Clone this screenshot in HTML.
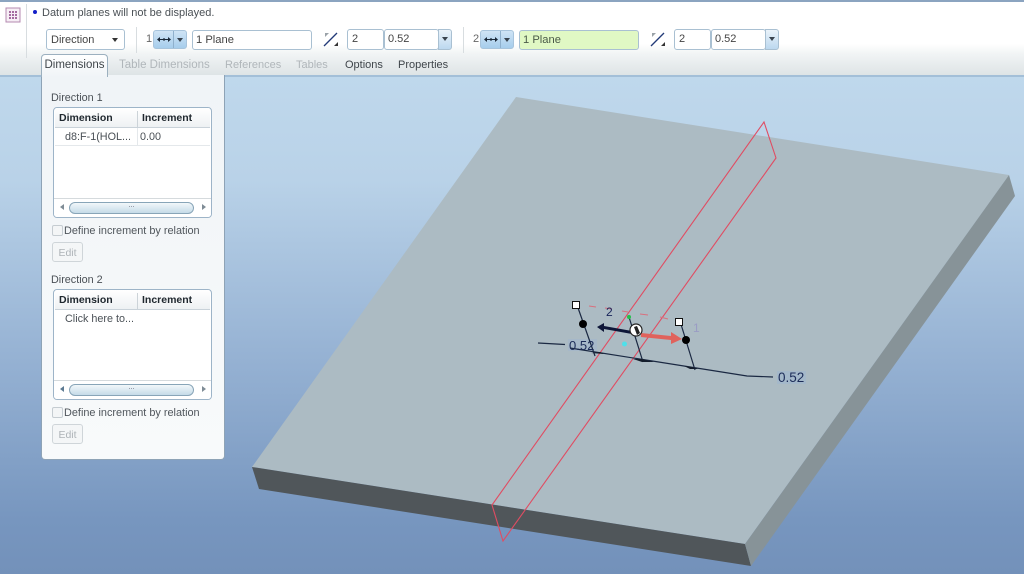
<!DOCTYPE html>
<html>
<head>
<meta charset="utf-8">
<style>
html,body{margin:0;padding:0;width:1024px;height:574px;overflow:hidden}
body{position:relative;font-family:"Liberation Sans",sans-serif;font-size:11px;color:#3a3f44;background:linear-gradient(#bfd8ec 75px,#b9d2e8 180px,#97b3d4 350px,#7796bf 520px,#7391ba 574px)}
.a{position:absolute;white-space:nowrap}
#bar{position:absolute;left:0;top:0;width:1024px;height:77px;background:linear-gradient(#fff 0,#fff 42px,#f1f4f5 52px,#dde3e5 74px);border-top:2px solid #8ba4c0;box-sizing:border-box;border-bottom:2px solid #a3bfd8}
.f{position:absolute;box-sizing:border-box;background:#fff;border:1px solid #a9c0d2;border-radius:3px;height:20px;line-height:18px;padding-left:3px;font-size:11px;color:#444}
.ddb{position:absolute;box-sizing:border-box;width:14px;height:20px;background:linear-gradient(#eaf3fa,#bcd8ef);border:1px solid #a9c0d2;border-radius:0 3px 3px 0}
.ddb:after,.sw i:after{content:"";position:absolute;left:3px;top:7px;border-left:3px solid transparent;border-right:3px solid transparent;border-top:4px solid #39434e}
.sw{position:absolute;box-sizing:border-box;width:34px;height:19px;background:linear-gradient(#cfe4f5,#a6cdec);border:1px solid #a8c4dc;border-radius:3px}
.sw svg{position:absolute;left:3px;top:4px}
.sw b{position:absolute;left:19px;top:0;width:1px;height:17px;background:#8fb0cc}
.sw i{position:absolute;left:20px;top:0;width:12px;height:17px}
.sep{position:absolute;width:1px;background:#d8dde0}
.tab{position:absolute;top:59px;font-size:11.5px;color:#b0b6ba}
#panel{position:absolute;left:41px;top:75px;width:184px;height:385px;box-sizing:border-box;background:linear-gradient(#f0f4f7,#f8fafb);border:1px solid #8ea3b6;border-top:none;border-radius:0 0 4px 4px}
.tb{position:absolute;left:11px;width:159px;height:111px;box-sizing:border-box;background:#fff;border:1px solid #9db4c8;border-radius:4px;overflow:hidden}
.th{position:absolute;left:1px;right:1px;top:0;height:19px;background:linear-gradient(#fff,#eef1f3);border-bottom:1px solid #c9d2d9;font:bold 10.5px/21px "Liberation Sans",sans-serif;color:#20282f}
.th span{position:absolute;top:0}
.th u{position:absolute;left:82px;top:3px;width:1px;height:16px;background:#ccd3d8}
.sb{position:absolute;left:0;right:0;bottom:0;height:18px;border-top:1px solid #d5dadd;background:#fff}
.sb .k{position:absolute;left:15px;top:3px;width:123px;height:10px;border:1px solid #88a5b8;border-radius:6px;background:linear-gradient(#f2f7fa,#c5dbe8);text-align:center;font:7px/6px "Liberation Sans",sans-serif;color:#556}
.sb .l{position:absolute;left:6px;top:5px;border-top:3px solid transparent;border-bottom:3px solid transparent;border-right:4px solid #7f8c96}
.sb .r{position:absolute;right:5px;top:5px;border-top:3px solid transparent;border-bottom:3px solid transparent;border-left:4px solid #7f8c96}
.cb{position:absolute;left:10px;width:11px;height:11px;box-sizing:border-box;border:1px solid #c5ccd1;border-radius:2px;background:#f3f5f6}
.ed{position:absolute;left:10px;width:31px;height:20px;box-sizing:border-box;border:1px solid #cfd5d9;border-radius:3px;background:#f4f6f7;color:#adb3b7;text-align:center;line-height:20px;font-size:10.5px}
</style>
</head>
<body>
<svg class="a" style="left:0;top:0" width="1024" height="574" viewBox="0 0 1024 574">
<polygon points="516,97 1009,175 745,544 252,467" fill="#acbbc3"/>
<polygon points="252,467 745,544 751,566 259,489" fill="#50565a"/>
<polygon points="1009,175 1015,196 751,566 745,544" fill="#879398"/>
<g fill="none" stroke="#e04c62" stroke-width="1.100">
<polygon points="764,122 776,158 503,541 492,505"/>
</g>
<path d="M589,306 L596,307 M605,308 L612,309 M622,311 L628,312 M640,314 L648,315 M660,317 L668,319" stroke="#d9707e" stroke-width="1" fill="none"/>
<rect x="568" y="339" width="29" height="12" fill="#9fb6cf" opacity=".5"/>
<rect x="777" y="371" width="29" height="13" fill="#9fb6cf" opacity=".6"/>
<g stroke="#1a2842" stroke-width="1.200" fill="none">
<path d="M538,343 L565,344.500"/>
<path d="M570,348 L747,376 L773,377"/>
<path d="M577,305 L595,356"/>
<path d="M680,321 L695,370"/>
<path d="M629,317 L643,362"/>
</g>
<g fill="#141d2c">
<path d="M591,353 l9,-1 l4,2 z"/>
<path d="M633,359 l9,0 l12,3 l-12,0 z"/>
<path d="M684,366 l8,1 l6,2 l-8,0 z"/>
</g>
<path d="M597,327 L604,323 L604,326 L632,331 L632,334 L604,329 L604,332 Z" fill="#0e1638"/>
<path d="M641,333 L671,336 L671,332 L682,339 L671,344 L671,340 L641,337 Z" fill="#e0625c"/>
<circle cx="583" cy="324" r="4" fill="#000"/>
<circle cx="686" cy="340" r="4" fill="#000"/>
<rect x="572.500" y="301.500" width="7" height="7" fill="#fff" stroke="#111"/>
<rect x="675.500" y="318.500" width="7" height="7" fill="#fff" stroke="#111"/>
<circle cx="636" cy="330" r="6" fill="#fff" stroke="#222" stroke-width="1.200"/>
<path d="M634,327 L637,335 L640,333 L637,326 Z" fill="#222"/>
<circle cx="629" cy="317" r="2" fill="#22c04a"/>
<circle cx="624.500" cy="344" r="2.500" fill="#4fe0ea"/>
<text x="569" y="350" font-family="Liberation Sans,sans-serif" font-size="13" fill="#1c2c58">0.52</text>
<text x="778" y="382" font-family="Liberation Sans,sans-serif" font-size="13.500" fill="#1c2c58">0.52</text>
<text x="606" y="316" font-family="Liberation Sans,sans-serif" font-size="12" fill="#18245a">2</text>
<text x="693" y="332" font-family="Liberation Sans,sans-serif" font-size="12" fill="#9a9cc4">1</text>
</svg>

<div id="bar"></div>
<svg class="a" style="left:5px;top:7px" width="17" height="17"><rect x="1" y="1" width="14" height="14" fill="#f6eef5" stroke="#b48ab0"/><g fill="#a46aa0"><rect x="4" y="4" width="2" height="2"/><rect x="7" y="4" width="2" height="2"/><rect x="10" y="4" width="2" height="2"/><rect x="4" y="7" width="2" height="2"/><rect x="7" y="7" width="2" height="2"/><rect x="10" y="7" width="2" height="2"/><rect x="4" y="10" width="2" height="2"/><rect x="7" y="10" width="2" height="2"/><rect x="10" y="10" width="2" height="2"/></g></svg>
<div class="sep" style="left:26px;top:4px;height:54px"></div>
<div class="a" style="left:33px;top:10px;width:4px;height:4px;border-radius:50%;background:#1420c8"></div>
<div class="a" style="left:42px;top:7px;font-size:11px;color:#4a5055">Datum planes will not be displayed.</div>

<div class="f" style="left:46px;top:29px;width:79px;height:21px;line-height:20px;padding-left:4px;font-size:11px">Direction<span style="position:absolute;left:65px;top:8px;border-left:3px solid transparent;border-right:3px solid transparent;border-top:4px solid #333"></span></div>
<div class="sep" style="left:136px;top:27px;height:26px"></div>
<div class="a" style="left:146px;top:33px;color:#666">1</div>
<div class="sw" style="left:153px;top:30px"><svg width="14" height="9"><path d="M1,4.500 H13" stroke="#1c2a3a"/><path d="M0,4.500 L3,2 V7 Z M14,4.500 L11,2 V7 Z" fill="#1c2a3a"/><circle cx="7" cy="4.500" r="1.200" fill="#1c2a3a"/></svg><b></b><i></i></div>
<div class="f" style="left:192px;top:30px;width:120px;font-size:11.200px">1 Plane</div>
<svg class="a" style="left:323px;top:31px" width="17" height="17"><path d="M1,15 L14,2" stroke="#223a78" stroke-width="1.300"/><path d="M2,2 h4 l-4,4 z" fill="#9aa2a8"/><path d="M15,15 h-4 l4,-4 z" fill="#333"/></svg>
<div class="f" style="left:347px;top:29px;width:37px;height:21px;line-height:19px;padding-left:4px">2</div>
<div class="f" style="left:384px;top:29px;width:55px;height:21px;line-height:19px">0.52</div>
<div class="ddb" style="left:438px;top:29px;height:21px"></div>
<div class="sep" style="left:463px;top:27px;height:26px"></div>
<div class="a" style="left:473px;top:33px;color:#666">2</div>
<div class="sw" style="left:480px;top:30px"><svg width="14" height="9"><path d="M1,4.500 H13" stroke="#1c2a3a"/><path d="M0,4.500 L3,2 V7 Z M14,4.500 L11,2 V7 Z" fill="#1c2a3a"/><circle cx="7" cy="4.500" r="1.200" fill="#1c2a3a"/></svg><b></b><i></i></div>
<div class="f" style="left:519px;top:30px;width:120px;background:#e0f8c4;color:#4a5a48;font-size:11.200px">1 Plane</div>
<svg class="a" style="left:650px;top:31px" width="17" height="17"><path d="M1,15 L14,2" stroke="#223a78" stroke-width="1.300"/><path d="M2,2 h4 l-4,4 z" fill="#9aa2a8"/><path d="M15,15 h-4 l4,-4 z" fill="#333"/></svg>
<div class="f" style="left:674px;top:29px;width:37px;height:21px;line-height:19px;padding-left:4px">2</div>
<div class="f" style="left:711px;top:29px;width:55px;height:21px;line-height:19px">0.52</div>
<div class="ddb" style="left:765px;top:29px;height:21px"></div>

<div id="panel">
<div class="a" style="left:9px;top:16px;color:#4a5056;font-size:10.800px;line-height:14px">Direction 1</div>
<div class="tb" style="top:32px">
<div class="th"><span style="left:4px">Dimension</span><u></u><span style="left:87px">Increment</span></div>
<div class="a" style="left:11px;top:22px;color:#4a5056;font-size:10.800px;line-height:14px">d8:F-1(HOL...</div>
<div class="a" style="left:86px;top:22px;color:#4a5056;font-size:10.800px;line-height:14px">0.00</div>
<div class="a" style="left:1px;right:1px;top:37px;height:1px;background:#e4e8eb"></div>
<div class="a" style="left:83px;top:20px;height:17px;width:1px;background:#e4e8eb"></div>
<div class="sb"><div class="l"></div><div class="k">...</div><div class="r"></div></div>
</div>
<div class="cb" style="top:150px"></div>
<div class="a" style="left:22px;top:149px;color:#50565c;font-size:10.900px;line-height:14px">Define increment by relation</div>
<div class="ed" style="top:167px">Edit</div>

<div class="a" style="left:9px;top:198px;color:#4a5056;font-size:10.800px;line-height:14px">Direction 2</div>
<div class="tb" style="top:214px">
<div class="th"><span style="left:4px">Dimension</span><u></u><span style="left:87px">Increment</span></div>
<div class="a" style="left:11px;top:22px;color:#4a5056;font-size:10.800px;line-height:14px">Click here to...</div>
<div class="sb"><div class="l" style="border-right-color:#5c7a92"></div><div class="k">...</div><div class="r"></div></div>
</div>
<div class="cb" style="top:332px"></div>
<div class="a" style="left:22px;top:331px;color:#50565c;font-size:10.900px;line-height:14px">Define increment by relation</div>
<div class="ed" style="top:349px">Edit</div>
</div>

<div class="a" style="left:41px;top:54px;width:67px;height:23px;box-sizing:border-box;border:1px solid #9cb0bf;border-bottom:none;border-radius:4px 4px 0 0;background:linear-gradient(#fff,#f0f4f7);text-align:center;line-height:20px;color:#3f454a;font-size:11.500px">Dimensions</div>
<div class="tab" style="left:119px">Table Dimensions</div>
<div class="tab" style="left:225px;font-size:11px">References</div>
<div class="tab" style="left:296px;font-size:11px">Tables</div>
<div class="tab" style="left:345px;color:#3f454a;font-size:11px">Options</div>
<div class="tab" style="left:398px;color:#3f454a;font-size:11px">Properties</div>
</body>
</html>
